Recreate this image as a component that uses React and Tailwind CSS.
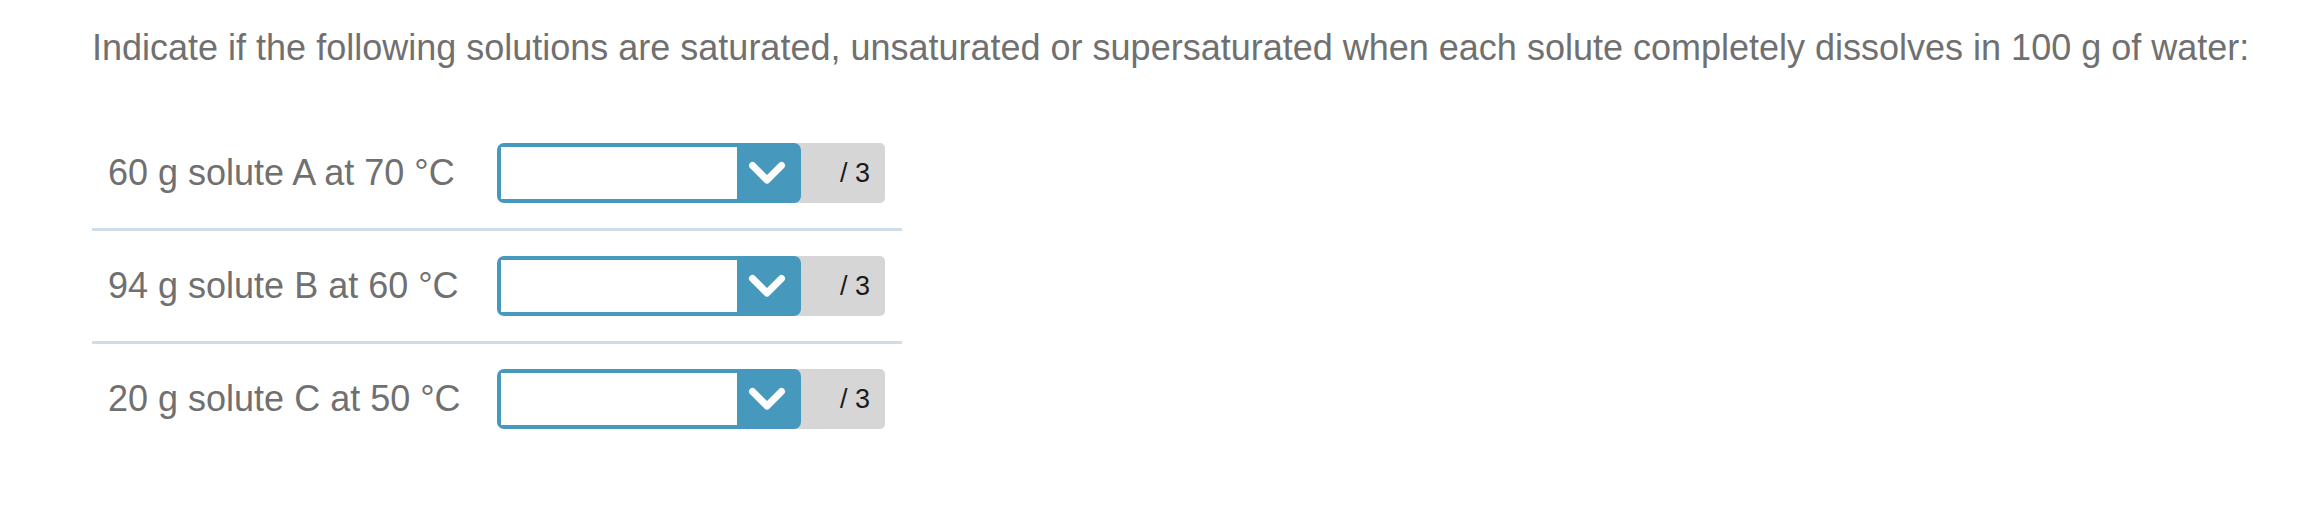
const rows = [
  { label: '60 g solute A at 70 °C' },
  { label: '94 g solute B at 60 °C' },
  { label: '20 g solute C at 50 °C' },
];

function Chevron() {
  return (
    <svg width="38" height="24" viewBox="0 0 38 24" fill="none">
      <path
        d="M4.5 4.5 L19 19 L33.5 4.5"
        stroke="white"
        strokeWidth="7"
        strokeLinecap="round"
        strokeLinejoin="round"
      />
    </svg>
  );
}

function AnswerSelect() {
  return (
    <div className="flex items-stretch">
      <div className="relative z-10 flex h-[60px] w-[304px] rounded-[7px] border-4 border-[#4699bd] bg-[#4699bd]">
        <div className="flex-1 bg-white" />
        <div className="flex w-[60px] items-center justify-center">
          <Chevron />
        </div>
      </div>
      <div className="-ml-[12px] flex h-[60px] w-[96px] items-center justify-end rounded-[5px] bg-[#d6d6d6] pr-[15px] text-[27px] text-[#1a1a1a]">
        / 3
      </div>
    </div>
  );
}

export default function App() {
  return (
    <div className="min-h-screen bg-white font-['Liberation_Sans',Arial,sans-serif]">
      <div className="pl-[92px] pt-[28px]">
        <p className="text-[36px] leading-[40px] text-[#707070]">
          Indicate if the following solutions are saturated, unsaturated or supersaturated when each solute completely dissolves in 100 g of water:
        </p>

        <div className="mt-[50px] w-[810px]">
          {rows.map((row, i) => (
            <div
              key={i}
              className={`flex items-center py-[25px] pl-[16px] ${i < rows.length - 1 ? 'border-b-[3px] border-[#cfdde9]' : ''}`}
            >
              <span className="w-[389px] text-[36px] leading-[40px] text-[#707070]">
                {row.label}
              </span>
              <AnswerSelect />
            </div>
          ))}
        </div>
      </div>
    </div>
  );
}
